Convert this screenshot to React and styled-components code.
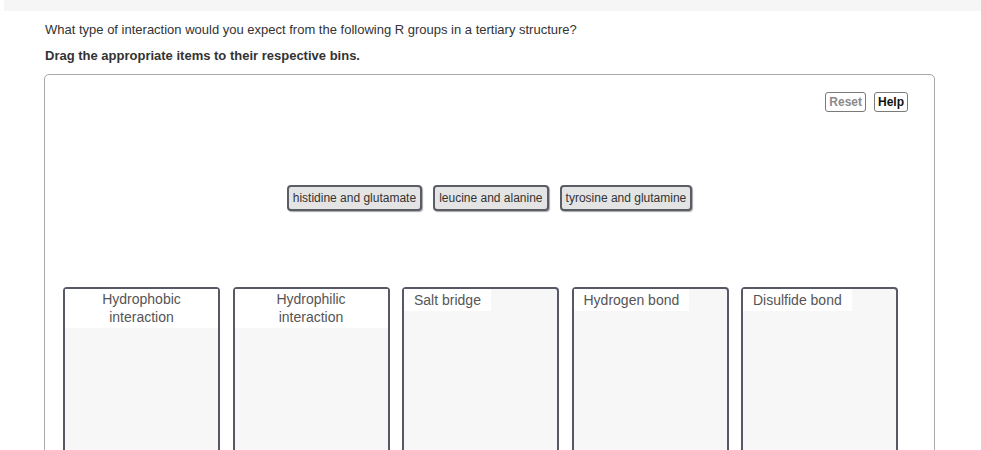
import React from "react";
import styled, { createGlobalStyle } from "styled-components";

const GlobalStyle = createGlobalStyle`
  html, body {
    margin: 0;
    padding: 0;
    background: #ffffff;
    font-family: "Liberation Sans", Arial, sans-serif;
  }
`;

const items = [
  "histidine and glutamate",
  "leucine and alanine",
  "tyrosine and glutamine",
];

const bins = [
  { label: "Hydrophobic interaction", stacked: true },
  { label: "Hydrophilic interaction", stacked: true },
  { label: "Salt bridge" },
  { label: "Hydrogen bond" },
  { label: "Disulfide bond" },
];

const App = () => {
  return (
    <Page>
      <GlobalStyle />
      <TopStrip />
      <Content>
        <Question>
          What type of interaction would you expect from the following R groups in a tertiary structure?
        </Question>
        <Instruction>Drag the appropriate items to their respective bins.</Instruction>
        <Panel>
          <Toolbar>
            <ToolButton disabled>Reset</ToolButton>
            <ToolButton>Help</ToolButton>
          </Toolbar>
          <ItemRow>
            {items.map((item) => (
              <DragItem key={item}>{item}</DragItem>
            ))}
          </ItemRow>
          <BinRow>
            {bins.map((bin) => (
              <Bin key={bin.label}>
                <BinLabel stacked={bin.stacked}>{bin.label}</BinLabel>
              </Bin>
            ))}
          </BinRow>
        </Panel>
      </Content>
    </Page>
  );
};

export default App;

const Page = styled.div`
  width: 981px;
  height: 450px;
  overflow: hidden;
`;

const TopStrip = styled.div`
  height: 11px;
  margin-left: 4px;
  background: #f6f6f6;
`;

const Content = styled.div`
  padding: 0 46px 0 44px;
`;

const Question = styled.p`
  margin: 10px 0 0 1px;
  font-size: 13px;
  line-height: 17px;
  color: #333333;
`;

const Instruction = styled.p`
  margin: 9px 0 0 1px;
  font-size: 13px;
  line-height: 17px;
  font-weight: bold;
  color: #333333;
`;

const Panel = styled.div`
  margin-top: 10px;
  border: 1px solid #aaaaaa;
  border-radius: 5px;
  padding: 17px 26px 0 18px;
  height: 420px;
  box-sizing: border-box;
`;

const Toolbar = styled.div`
  display: flex;
  justify-content: flex-end;
  gap: 8px;
  height: 20px;
`;

const ToolButton = styled.button`
  height: 20px;
  padding: 0 3px;
  font-family: "Liberation Sans", Arial, sans-serif;
  font-size: 12px;
  font-weight: bold;
  color: ${({ disabled }) => (disabled ? "#8a8a8a" : "#111111")};
  background: #ffffff;
  border: 1px solid #7a7a7a;
  border-radius: 3px;
  cursor: pointer;
`;

const ItemRow = styled.div`
  display: flex;
  justify-content: center;
  gap: 11px;
  margin: 73px 0 0 -18px;
  width: calc(100% + 44px);
`;

const DragItem = styled.div`
  height: 26px;
  box-sizing: border-box;
  padding: 0 4px;
  display: flex;
  align-items: center;
  font-size: 12px;
  color: #333333;
  background: #e4e4e4;
  border: 2px solid #5a5c66;
  border-radius: 4px;
  box-shadow: 1px 1px 1px rgba(0, 0, 0, 0.35);
`;

const BinRow = styled.div`
  display: grid;
  grid-template-columns: repeat(5, 157px);
  gap: 12.5px;
  margin-top: 76px;
`;

const Bin = styled.div`
  height: 200px;
  box-sizing: border-box;
  background: #f7f7f7;
  border: 2px solid #565865;
  border-radius: 4px;
`;

const BinLabel = styled.div`
  display: ${({ stacked }) => (stacked ? "block" : "inline-block")};
  padding: ${({ stacked }) => (stacked ? "1px 20px 2px" : "2px 10px")};
  background: #ffffff;
  font-size: 14px;
  line-height: 18px;
  color: #555555;
  text-align: center;
`;
